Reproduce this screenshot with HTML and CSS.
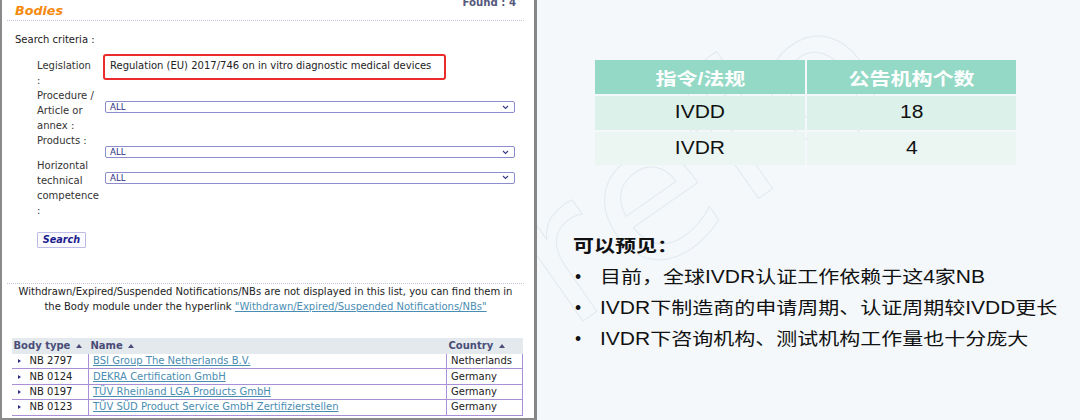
FILE: index.html
```html
<!DOCTYPE html>
<html lang="zh-CN">
<head>
    <meta charset="UTF-8">
    <meta name="viewport" content="width=device-width, initial-scale=1.0">
    <title>IVDR 公告机构</title>
    <link rel="stylesheet" href="styles.css">
</head>
<body>
<div class="page">
    <section class="nb-panel">
        <div class="panel-head">
            <span class="panel-title">Bodies</span>
            <span class="found">Found : 4</span>
        </div>

        <div class="criteria-title">Search criteria :</div>

        <div class="criteria">
            <div class="crit-label">Legislation<br>:</div>
            <div class="crit-value legis">
                <div class="legis-box">Regulation (EU) 2017/746 on in vitro diagnostic medical devices</div>
            </div>

            <div class="crit-label">Procedure /<br>Article or<br>annex :</div>
            <div class="crit-value">
                <div class="fake-select">ALL<svg class="chev" width="7" height="5" viewBox="0 0 7 5"><path d="M1 1 L3.5 3.5 L6 1" fill="none" stroke="#3a3a8c" stroke-width="1.1"/></svg></div>
            </div>

            <div class="crit-label">Products :</div>
            <div class="crit-value">
                <div class="fake-select">ALL<svg class="chev" width="7" height="5" viewBox="0 0 7 5"><path d="M1 1 L3.5 3.5 L6 1" fill="none" stroke="#3a3a8c" stroke-width="1.1"/></svg></div>
            </div>

            <div class="crit-label">Horizontal<br>technical<br>competence<br>:</div>
            <div class="crit-value">
                <div class="fake-select">ALL<svg class="chev" width="7" height="5" viewBox="0 0 7 5"><path d="M1 1 L3.5 3.5 L6 1" fill="none" stroke="#3a3a8c" stroke-width="1.1"/></svg></div>
            </div>
        </div>

        <button class="search-btn">Search</button>

        <p class="notice">
            Withdrawn/Expired/Suspended Notifications/NBs are not displayed in this list, you can find them in<br>
            the Body module under the hyperlink <a href="#">"Withdrawn/Expired/Suspended Notifications/NBs"</a>
        </p>

        <table class="bodies-table">
            <thead>
                <tr>
                    <th class="c-type">Body type <span class="sort"></span></th>
                    <th class="c-name">Name <span class="sort"></span></th>
                    <th class="c-country">Country <span class="sort"></span></th>
                </tr>
            </thead>
            <tbody>
                <tr>
                    <td><span class="arrow"></span>NB 2797</td>
                    <td class="line"><a href="#">BSI Group The Netherlands B.V.</a></td>
                    <td class="line">Netherlands</td>
                </tr>
                <tr>
                    <td><span class="arrow"></span>NB 0124</td>
                    <td class="line"><a href="#">DEKRA Certification GmbH</a></td>
                    <td class="line">Germany</td>
                </tr>
                <tr>
                    <td><span class="arrow"></span>NB 0197</td>
                    <td class="line"><a href="#">TÜV Rheinland LGA Products GmbH</a></td>
                    <td class="line">Germany</td>
                </tr>
                <tr>
                    <td><span class="arrow"></span>NB 0123</td>
                    <td class="line"><a href="#">TÜV SÜD Product Service GmbH Zertifizierstellen</a></td>
                    <td class="line">Germany</td>
                </tr>
            </tbody>
        </table>
    </section>

    <section class="slide">
        <div class="watermark" aria-hidden="true">refo</div>

        <div class="count-table">
            <div class="ct-head"><span class="wide">指令/法规</span></div>
            <div class="ct-head"><span class="wide">公告机构个数</span></div>
            <div class="ct-cell row-a"><span class="wide">IVDD</span></div>
            <div class="ct-cell row-a"><span class="wide">18</span></div>
            <div class="ct-cell row-b"><span class="wide">IVDR</span></div>
            <div class="ct-cell row-b"><span class="wide">4</span></div>
        </div>

        <div class="outlook">
            <div class="outlook-title"><span class="wide">可以预见：</span></div>
            <ul class="outlook-list">
                <li><span class="dot">•</span><span class="wide">目前，全球IVDR认证工作依赖于这4家NB</span></li>
                <li><span class="dot">•</span><span class="wide">IVDR下制造商的申请周期、认证周期较IVDD更长</span></li>
                <li><span class="dot">•</span><span class="wide">IVDR下咨询机构、测试机构工作量也十分庞大</span></li>
            </ul>
        </div>
    </section>
</div>
</body>
</html>
```

FILE: styles.css
```css
body {
    margin: 0;
    background: #f4f8fb;
    font-family: "DejaVu Sans", Verdana, sans-serif;
}
.page {
    display: flex;
    width: 1080px;
    height: 420px;
    overflow: hidden;
}

/* left: screenshot of the NANDO search page */
.nb-panel {
    width: 537px;
    height: 420px;
    box-sizing: border-box;
    flex-shrink: 0;
    background: #fff;
    border-left: 2px solid #8a8a8a;
    border-right: 3px solid #858585;
    border-bottom: 2px solid #8a8a8a;
    padding: 0 10px 0 5px;
    font-size: 10px;
    color: #222;
}
.panel-head {
    height: 20px;
    display: flex;
    justify-content: space-between;
    align-items: flex-start;
    border-bottom: 1px dotted #c4c4dc;
}
.panel-title {
    padding: 2px 0 0 8px;
    line-height: 18px;
    font-size: 12.7px;
    font-weight: bold;
    font-style: italic;
    color: #f58a10;
}
.found {
    margin: -3px 8px 0 0;
    line-height: 12px;
    font-size: 10.2px;
    font-weight: bold;
    color: #55587c;
}
.criteria-title {
    margin: 11px 0 0 8px;
    line-height: 15px;
}
.criteria {
    display: grid;
    grid-template-columns: 68px 410px;
    margin: 10.5px 0 0 30px;
    line-height: 15px;
}
.crit-label {
    white-space: nowrap;
    color: #333;
}
.crit-value {
    padding-top: 13.5px;
}
.crit-value.legis {
    padding-top: 0;
}
.legis-box {
    width: 343px;
    height: 26px;
    box-sizing: border-box;
    margin: -3.5px 0 0 -2px;
    padding: 1.5px 0 0 5px;
    border: 2px solid #ea2c2c;
    border-radius: 3px;
    white-space: nowrap;
}
.fake-select {
    height: 12px;
    box-sizing: border-box;
    display: flex;
    align-items: center;
    justify-content: space-between;
    padding: 0 5px 0 4px;
    border: 1px solid #8c8ccf;
    border-radius: 2px;
    font-size: 8.7px;
    line-height: 10px;
    color: #2c2c84;
}
.search-btn {
    display: block;
    margin: 13.5px 0 0 30px;
    width: 49px;
    height: 16px;
    padding: 0;
    border: 1px solid #bcbce6;
    border-radius: 1px;
    background: #fbfbff;
    font-family: "DejaVu Sans", Verdana, sans-serif;
    font-size: 9.7px;
    font-weight: bold;
    font-style: italic;
    color: #1d1d8e;
}
.notice {
    margin: 35.5px 0 0 0;
    border-top: 1px dotted #c4c4dc;
    line-height: 15px;
    text-align: center;
    white-space: nowrap;
    color: #222;
}
.notice a, .bodies-table a {
    color: #4a8db3;
}
.bodies-table {
    margin: 23.5px 0 0 4.5px;
    width: 511px;
    border-collapse: collapse;
    table-layout: fixed;
}
.bodies-table th, .bodies-table td {
    padding: 0 0 0 4px;
    text-align: left;
    white-space: nowrap;
}
.bodies-table th {
    height: 16.5px;
    padding-left: 2px;
    background: #e3e9ed;
    font-weight: bold;
    color: #4a4d78;
}
.bodies-table td {
    height: 14.4px;
    border-bottom: 1px solid #a98fd6;
    line-height: 14px;
}
.bodies-table td.line {
    border-left: 1px solid #a98fd6;
    border-right: 1px solid #a98fd6;
}
.c-type { width: 75px; }
.c-name { width: 356px; }
.c-country { width: 74px; }
.sort {
    display: inline-block;
    width: 0;
    height: 0;
    margin-left: 2px;
    vertical-align: 1px;
    border-left: 3px solid transparent;
    border-right: 3px solid transparent;
    border-bottom: 4px solid #4a4d78;
}
.arrow {
    display: inline-block;
    width: 0;
    height: 0;
    margin: 0 9px 0 2px;
    vertical-align: 1px;
    border-top: 2.5px solid transparent;
    border-bottom: 2.5px solid transparent;
    border-left: 3px solid #2b2b8c;
}

/* right: slide content */
.slide {
    flex: 1;
    position: relative;
    overflow: hidden;
    padding: 60px 0 0 36px;
    font-family: "Liberation Sans", "Noto Sans CJK SC", sans-serif;
    color: #111;
}
.watermark {
    position: absolute;
    left: -60px;
    top: 200px;
    transform: rotate(-35deg);
    transform-origin: left top;
    font-family: "DejaVu Sans", sans-serif;
    font-size: 190px;
    line-height: 1;
    letter-spacing: 10px;
    color: transparent;
    -webkit-text-stroke: 1px #e2e9ef;
    white-space: nowrap;
}
.count-table, .outlook {
    position: relative;
}
.wide {
    display: inline-block;
    transform: scaleX(1.2);
    transform-origin: left center;
}
.count-table {
    display: grid;
    grid-template-columns: 210px 209px;
    column-gap: 2px;
    row-gap: 2px;
    width: 421px;
    margin-left: 22px;
    font-size: 17.5px;
}
.ct-head, .ct-cell {
    display: flex;
    align-items: center;
    justify-content: center;
}
.ct-head .wide, .ct-cell .wide {
    transform-origin: center center;
}
.ct-head {
    height: 34px;
    background: #94d9c6;
    color: #fff;
    font-weight: bold;
}
.ct-cell { height: 33.5px; }
.row-a { background: #dbf1ea; }
.row-b { background: #ebf6f3; }
.outlook {
    margin-top: 66px;
    font-size: 17.5px;
    line-height: 31px;
}
.outlook-title {
    font-weight: bold;
}
.outlook-list {
    list-style: none;
    margin: 0;
    padding: 0;
}
.outlook-list li {
    display: flex;
}
.dot {
    width: 27px;
    padding-left: 2px;
    box-sizing: border-box;
}
```
